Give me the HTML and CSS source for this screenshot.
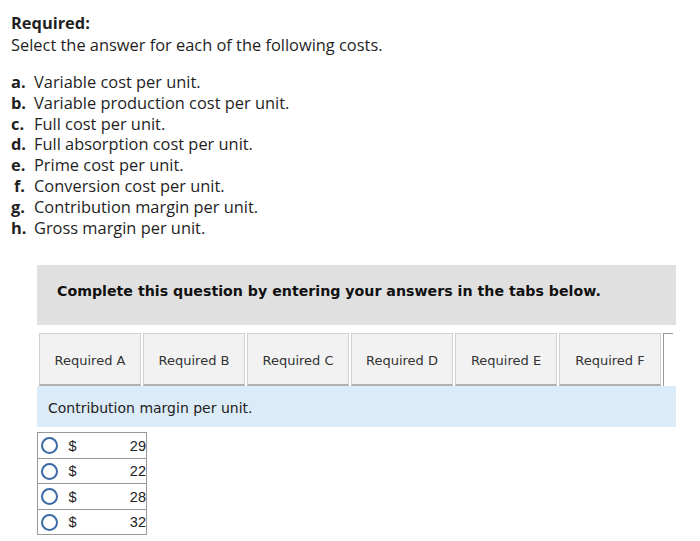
FILE: index.html
```html
<!DOCTYPE html>
<html lang="en">
<head>
<meta charset="UTF-8">
<title>Required</title>
<link rel="stylesheet" href="styles.css">
</head>
<body>
  <div class="intro">
    <h3 class="introTitle">Required:</h3>
    <p class="introText">Select the answer for each of the following costs.</p>
    <ol class="costList">
      <li><span class="letter">a.</span>Variable cost per unit.</li>
      <li><span class="letter">b.</span>Variable production cost per unit.</li>
      <li><span class="letter">c.</span>Full cost per unit.</li>
      <li><span class="letter">d.</span>Full absorption cost per unit.</li>
      <li><span class="letter">e.</span>Prime cost per unit.</li>
      <li><span class="letter letter-f">f.</span>Conversion cost per unit.</li>
      <li><span class="letter">g.</span>Contribution margin per unit.</li>
      <li><span class="letter">h.</span>Gross margin per unit.</li>
    </ol>
  </div>

  <div class="question">
    <div class="banner">Complete this question by entering your answers in the tabs below.</div>
    <div class="tabs">
      <div class="tab">Required A</div>
      <div class="tab">Required B</div>
      <div class="tab">Required C</div>
      <div class="tab">Required D</div>
      <div class="tab">Required E</div>
      <div class="tab">Required F</div>
      <div class="tab tab-more"></div>
    </div>
    <div class="prompt">Contribution margin per unit.</div>
    <table class="answers">
      <tr>
        <td class="radioCell"><span class="radio"></span></td>
        <td class="dollar">$</td>
        <td class="amount">29</td>
      </tr>
      <tr>
        <td class="radioCell"><span class="radio"></span></td>
        <td class="dollar">$</td>
        <td class="amount">22</td>
      </tr>
      <tr>
        <td class="radioCell"><span class="radio"></span></td>
        <td class="dollar">$</td>
        <td class="amount">28</td>
      </tr>
      <tr>
        <td class="radioCell"><span class="radio"></span></td>
        <td class="dollar">$</td>
        <td class="amount">32</td>
      </tr>
    </table>
  </div>
</body>
</html>
```

FILE: styles.css
```css
* {
  margin: 0;
  padding: 0;
  box-sizing: border-box;
}

body {
  background: #ffffff;
  color: #1f1f1f;
  font-family: "Open Sans", "Liberation Sans", sans-serif;
}

.intro {
  padding: 12px 0 0 11px;
}

.introTitle {
  font-size: 16.4px;
  font-weight: 700;
  line-height: 22px;
}

.introText {
  font-size: 16.4px;
  line-height: 22px;
}

.costList {
  list-style: none;
  margin-top: 16px;
}

.costList li {
  font-size: 16.4px;
  line-height: 20.8px;
  display: flex;
}

.letter {
  width: 23px;
  font-weight: 700;
}

.letter-f {
  padding-left: 3px;
}

.question {
  margin: 27px 0 0 37px;
  width: 639px;
  font-family: "DejaVu Sans", Verdana, sans-serif;
}

.banner {
  background: #e0e0e0;
  height: 60px;
  padding: 18px 0 0 20px;
  font-size: 14.2px;
  font-weight: 700;
  color: #111;
}

.tabs {
  display: flex;
  gap: 2px;
  margin-top: 8px;
  padding-left: 2px;
  height: 53px;
}

.tab {
  width: 102px;
  background: #f2f2f2;
  border: 1px solid #d0d0d0;
  border-bottom: 2px solid #b0b0b0;
  color: #333;
  font-size: 13px;
  display: flex;
  align-items: center;
  justify-content: center;
  padding-top: 2px;
}

.tab-more {
  width: 10px;
  flex: none;
  background: #fff;
  border: 1px solid #999;
  border-right: none;
  border-bottom: none;
}

.prompt {
  background: #dcebf8;
  height: 41px;
  padding: 14px 0 0 11px;
  font-size: 14px;
  color: #222;
}

.answers {
  margin-top: 5px;
  border-collapse: collapse;
  width: 110px;
  font-family: "Liberation Sans", Arial, sans-serif;
  font-size: 14.5px;
  color: #222;
}

.answers td {
  border-top: 1px solid #999;
  border-bottom: 1px solid #999;
  height: 25.5px;
  padding: 0;
}

.radioCell {
  width: 26px;
  border-left: 1px solid #999;
  padding-left: 3px !important;
}

.radio {
  display: block;
  width: 17px;
  height: 17px;
  border: 2px solid #3c6aa5;
  border-radius: 50%;
}

.dollar {
  padding-left: 5px !important;
}

.amount {
  text-align: right;
  border-right: 1px solid #999;
}
```
